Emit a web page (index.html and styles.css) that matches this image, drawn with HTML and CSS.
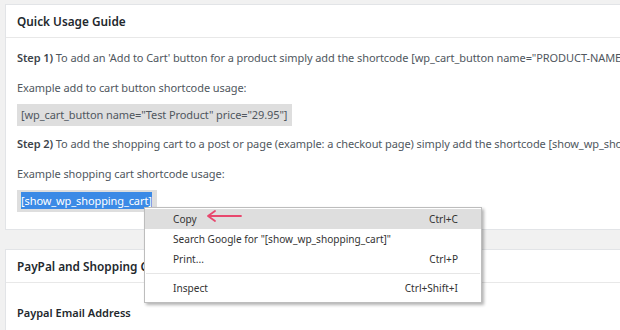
FILE: index.html
```html
<!DOCTYPE html>
<html>
<head>
<meta charset="utf-8">
<link rel="stylesheet" href="styles.css">
</head>
<body>
<div class="page">
  <div class="panel">
    <div class="panel-head">Quick Usage Guide</div>
    <div class="panel-body">
      <p class="step"><b>Step 1)</b> To add an 'Add to Cart' button for a product simply add the shortcode [wp_cart_button name="PRODUCT-NAME" price="PRODUCT-PRICE"] to a post or page.</p>
      <p class="line">Example add to cart button shortcode usage:</p>
      <div class="code">[wp_cart_button name="Test Product" price="29.95"]</div>
      <p class="step2"><b>Step 2)</b> To add the shopping cart to a post or page (example: a checkout page) simply add the shortcode [show_wp_shopping_cart] to a post or page.</p>
      <p class="line">Example shopping cart shortcode usage:</p>
      <div class="code"><span class="sel">[show_wp_shopping_cart]</span></div>
    </div>
  </div>
  <div class="panel panel2">
    <div class="panel-head">PayPal and Shopping Cart Settings</div>
    <div class="panel-body2">
      <div class="label">Paypal Email Address</div>
    </div>
  </div>
</div>

<div class="menu">
  <div class="item active"><span>Copy</span><span class="key">Ctrl+C</span></div>
  <div class="item"><span>Search Google for "[show_wp_shopping_cart]"</span><span class="key"></span></div>
  <div class="item"><span>Print...</span><span class="key">Ctrl+P</span></div>
  <div class="sep"></div>
  <div class="item inspect"><span>Inspect</span><span class="key">Ctrl+Shift+I</span></div>
</div>

<svg class="arrow" width="40" height="14" viewBox="0 0 40 14">
  <path d="M3 7 H36 M3 7 L10 2 M3 7 L10 12" fill="none" stroke="#e8486e" stroke-width="1.8" stroke-linecap="round"/>
</svg>
</body>
</html>
```
FILE: styles.css
```css
html, body {
  margin: 0;
  padding: 0;
  background: #f1f1f1;
  overflow: hidden;
  width: 620px;
  height: 330px;
}
body {
  font-family: "Noto Sans", "Open Sans", sans-serif;
  font-size: 11px;
  color: #50575e;
  position: relative;
}
.page {
  padding: 4px 0 0 5px;
  width: 800px;
}
.panel {
  background: #fff;
  border: 1px solid #e2e4e7;
  white-space: nowrap;
}
.panel2 {
  margin-top: 19px;
}
.panel-head {
  height: 32px;
  line-height: 33px;
  padding-left: 11px;
  font-size: 11.8px;
  font-weight: 600;
  color: #23282d;
  border-bottom: 1px solid #e8e8e8;
}
.panel-body {
  padding: 11px 11px 17px;
}
.panel-body p {
  margin: 0;
  line-height: 18px;
  letter-spacing: -0.08px;
}
.panel-body b {
  font-weight: 600;
  color: #3c434a;
}
.line {
  margin-top: 12px !important;
}
.step2 {
  margin-top: 9px !important;
}
.code {
  display: inline-block;
  margin-top: 7px;
  background: #dedede;
  padding: 2px 5px 2px 4px;
  line-height: 18px;
  letter-spacing: -0.1px;
  color: #50575e;
}
.sel {
  background: #3b8ae6;
  color: #fff;
  padding: 1px 0;
}
.panel-body2 {
  padding: 22px 11px 0;
  height: 40px;
}
.label {
  font-weight: 600;
  color: #23282d;
  font-size: 11px;
}
.menu {
  position: absolute;
  left: 144px;
  top: 207px;
  width: 336px;
  background: #fff;
  border: 1px solid #bdbdbd;
  box-shadow: 2px 2px 3px rgba(0,0,0,0.3);
  padding: 1px 0 3px;
  font-size: 10.1px;
  color: #333;
}
.item {
  display: flex;
  justify-content: space-between;
  height: 20px;
  line-height: 20px;
  padding: 0 23px 0 28px;
}
.item.active {
  background: #dedede;
}
.inspect {
  height: 22px;
  line-height: 22px;
}
.sep {
  height: 1px;
  background: #e6e6e6;
  margin: 4px 1px 3px;
}
.arrow {
  position: absolute;
  left: 205px;
  top: 209px;
}
```
